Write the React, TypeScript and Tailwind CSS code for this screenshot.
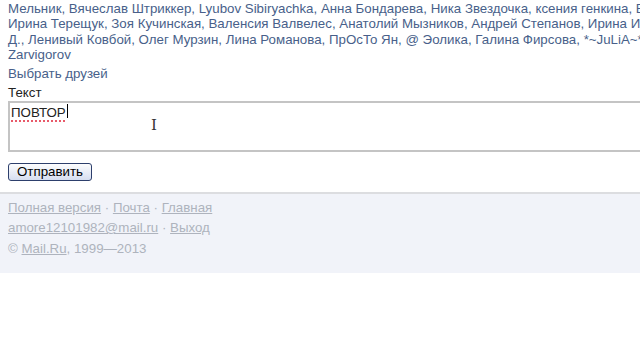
import React from 'react'

const FRIEND_LINES = [
  'Мельник, Вячеслав Штриккер, Lyubov Sibiryachka, Анна Бондарева, Ника Звездочка, ксения генкина, Валентина',
  'Ирина Терещук, Зоя Кучинская, Валенсия Валвелес, Анатолий Мызников, Андрей Степанов, Ирина Иванова',
  'Д., Ленивый Ковбой, Олег Мурзин, Лина Романова, ПрОсТо Ян, @ Эолика, Галина Фирсова, *~JuLiA~*',
  'Zarvigorov',
]

const App: React.FC = () => {
  return (
    <div className="min-h-[360px] w-[640px] overflow-hidden bg-white font-['Liberation_Sans',Arial,sans-serif] text-[13.3px]">
      <div className="px-2 pt-px">
        <div className="leading-[15.3px] text-[#485f8a]">
          {FRIEND_LINES.map((line) => (
            <div key={line} className="whitespace-nowrap">
              {line}
            </div>
          ))}
        </div>

        <div className="mt-[4px] leading-[15px] text-[#485f8a]">Выбрать друзей</div>
        <div className="mt-[4px] leading-[15px] text-[#222]">Текст</div>

        <div className="relative mt-[1px] h-[51px] w-[660px] border-2 border-[#c4c4c4] bg-white">
          <span className="ml-[1px] mt-[3px] inline-block leading-[14px] text-[#222] underline decoration-[#e85a6a] decoration-dotted decoration-2 underline-offset-[3px]">
            ПОВТОР
          </span>
          <span className="ml-[1px] inline-block h-[14px] w-px translate-y-[1px] bg-black" />
          <span className="absolute left-[141px] top-[15px] font-['DejaVu_Serif',serif] text-[15px] leading-none text-[#333]">
            I
          </span>
        </div>

        <button className="mt-[11px] h-[18px] rounded-[3px] border border-[#2d3f6c] bg-gradient-to-b from-[#fdfdfd] to-[#d6def0] px-[8px] text-[13.3px] leading-[14px] text-black">
          Отправить
        </button>
      </div>

      <div className="mt-[10px] border-t-2 border-[#dcdde0] bg-[#f1f3f9] px-2 pb-[14px] pt-[4px] leading-[20px] text-[#aeb3bd]">
        <div>
          <span className="underline">Полная версия</span> · <span className="underline">Почта</span> ·{' '}
          <span className="underline">Главная</span>
        </div>
        <div>
          <span className="underline">amore12101982@mail.ru</span> · <span className="underline">Выход</span>
        </div>
        <div className="mt-px">
          © <span className="underline">Mail.Ru</span>, 1999—2013
        </div>
      </div>
    </div>
  )
}

export default App
